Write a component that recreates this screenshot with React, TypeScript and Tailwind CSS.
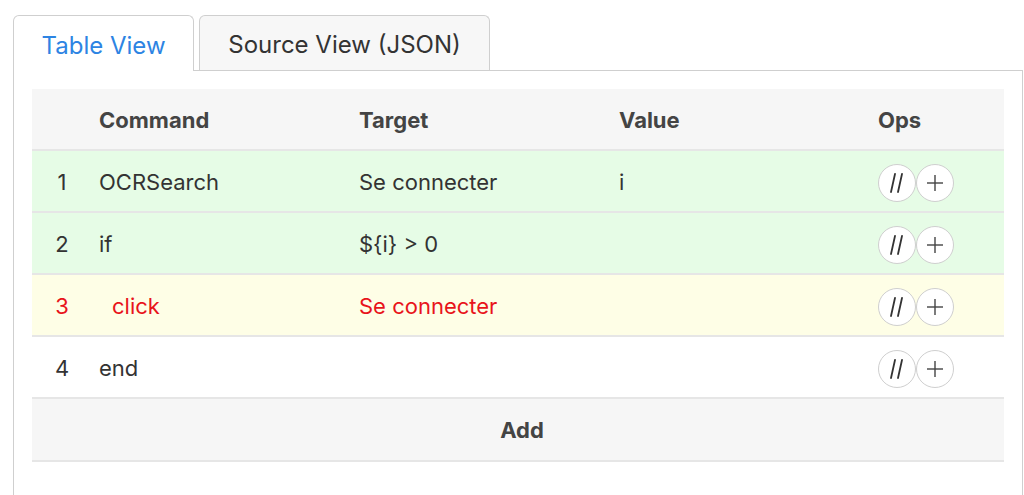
import React from "react";

type Row = { n: number; cmd: string; target: string; value: string; bg: string; red?: boolean; indent?: boolean };

const rows: Row[] = [
  { n: 1, cmd: "OCRSearch", target: "Se connecter", value: "i", bg: "bg-[#e6fce6]" },
  { n: 2, cmd: "if", target: "${i} > 0", value: "", bg: "bg-[#e6fce6]" },
  { n: 3, cmd: "click", target: "Se connecter", value: "", bg: "bg-[#fefee6]", red: true, indent: true },
  { n: 4, cmd: "end", target: "", value: "", bg: "bg-white" },
];

function OpButton({ children }: { children: React.ReactNode }) {
  return (
    <div className="w-[38px] h-[38px] rounded-full border border-[#cfcfcf] bg-white flex items-center justify-center text-[#333]">
      {children}
    </div>
  );
}

export default function App() {
  return (
    <div
      className="w-[1024px] h-[495px] overflow-hidden bg-white text-[#333]"
      style={{ fontFamily: "Inter, 'Liberation Sans', sans-serif" }}
    >
      <div className="pt-[14px] pl-[13px]">
        <div className="flex items-end h-[56px]">
          <div className="relative z-10 w-[181px] h-[56px] -mb-px border border-b-0 border-[#cfcfcf] rounded-t-[6px] bg-white flex items-center justify-center pt-[4px] text-[24px] text-[#2d84e3]">
            Table View
          </div>
          <div className="ml-[5px] w-[291px] h-[55px] border border-b-0 border-[#cfcfcf] rounded-t-[6px] bg-[#f7f7f7] flex items-center justify-center pt-[4px] text-[24px] text-[#333]">
            Source View (JSON)
          </div>
        </div>
        <div className="w-[1010px] h-[500px] border border-[#cfcfcf] pt-[18px] pl-[18px]">
          <div className="w-[972px] text-[22px]">
            <div className="flex h-[62px] items-center pt-[2px] bg-[#f6f6f6] border-b-2 border-[#e6e6e6] font-bold text-[#444]">
              <div className="w-[60px]" />
              <div className="w-[260px] pl-[7px]">Command</div>
              <div className="w-[260px] pl-[7px]">Target</div>
              <div className="w-[260px] pl-[7px]">Value</div>
              <div className="w-[132px] pl-[6px]">Ops</div>
            </div>
            {rows.map((r) => (
              <div
                key={r.n}
                className={`flex h-[62px] items-center pt-[3px] border-b-2 border-[#e6e6e6] ${r.bg} ${r.red ? "text-[#e8141b]" : "text-[#333]"}`}
              >
                <div className="w-[60px] text-center">{r.n}</div>
                <div className={`w-[260px] ${r.indent ? "pl-[20px]" : "pl-[7px]"}`}>{r.cmd}</div>
                <div className="w-[260px] pl-[7px]">{r.target}</div>
                <div className="w-[260px] pl-[7px]">{r.value}</div>
                <div className="w-[132px] pl-[6px] flex text-[#333]">
                  <OpButton>
                    <svg width="18" height="22" viewBox="0 0 18 22" fill="none" stroke="#333" strokeWidth="1.8" strokeLinecap="round">
                      <line x1="7" y1="2" x2="3" y2="20" />
                      <line x1="14" y1="2" x2="10" y2="20" />
                    </svg>
                  </OpButton>
                  <OpButton>
                    <svg width="18" height="18" viewBox="0 0 18 18" fill="none" stroke="#444" strokeWidth="1.4">
                      <line x1="9" y1="1" x2="9" y2="17" />
                      <line x1="1" y1="9" x2="17" y2="9" />
                    </svg>
                  </OpButton>
                </div>
              </div>
            ))}
            <div className="flex h-[63px] items-center justify-center pt-[2px] pl-[8px] bg-[#f6f6f6] border-b-2 border-[#e6e6e6] font-bold text-[#444]">
              Add
            </div>
          </div>
        </div>
      </div>
    </div>
  );
}
